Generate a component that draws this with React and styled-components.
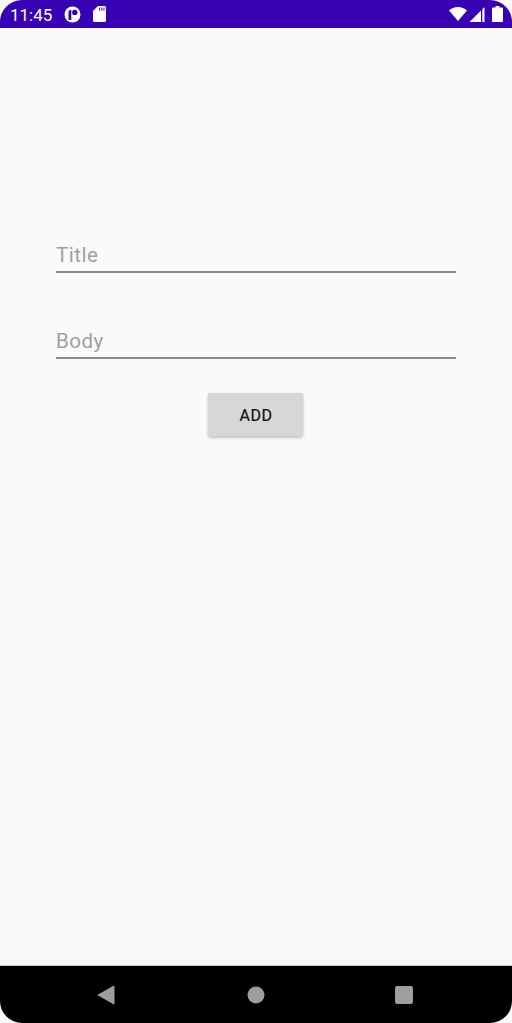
import React from "react";
import styled, { createGlobalStyle } from "styled-components";

const Global = createGlobalStyle`
  html, body { margin: 0; padding: 0; background: #fafafa; }
  * { box-sizing: border-box; }
`;

const Screen = styled.div`
  width: 512px;
  height: 1023px;
  display: flex;
  flex-direction: column;
  background: #fafafa;
  font-family: Roboto, "Liberation Sans", sans-serif;
  overflow: hidden;
`;

const StatusBar = styled.div`
  flex: 0 0 28px;
  height: 28px;
  background: #3700b3;
  color: #fff;
  display: flex;
  align-items: center;
  justify-content: space-between;
  padding: 0 9px 0 10px;
  border-radius: 22px 22px 0 0;
`;

const StatusGroup = styled.div`
  display: flex;
  align-items: center;
  gap: ${(p) => p.$gap}px;
`;

const Clock = styled.span`
  font-size: 17px;
  letter-spacing: 0;
  padding-top: 1px;
  line-height: 28px;
`;

const Content = styled.main`
  flex: 1;
  display: flex;
  flex-direction: column;
  align-items: center;
  padding: 213px 56px 0;
`;

const Field = styled.div`
  width: 400px;
  height: 32px;
  margin-bottom: ${(p) => p.$mb}px;
  border-bottom: 2px solid #8a8a8a;
  color: #a0a0a0;
  font-size: 20.5px;
  letter-spacing: 0.5px;
  line-height: 28px;
`;

const AddButton = styled.button`
  width: 95px;
  height: 43px;
  margin: 34px 1px 0 0;
  padding: 2px 0 0 1px;
  border: none;
  border-radius: 2px;
  background: #d6d7d7;
  color: #111;
  font-family: inherit;
  font-size: 16px;
  font-weight: 400;
  letter-spacing: 0.45px;
  -webkit-text-stroke: 0.2px #111;
  box-shadow: 0 2px 3px rgba(0, 0, 0, 0.2), 0 0 2px rgba(0, 0, 0, 0.08);
`;

const NavBar = styled.nav`
  flex: 0 0 58px;
  height: 58px;
  background: #000;
  border-top: 1px solid #c8c8c8;
  border-radius: 0 0 22px 22px;
  display: grid;
  grid-template-columns: repeat(3, 148px);
  justify-content: center;
  align-items: center;
`;

const NavSlot = styled.div`
  display: flex;
  justify-content: center;
  align-items: center;
`;

export default function App() {
  return (
    <Screen>
      <Global />
      <StatusBar>
        <StatusGroup $gap={12}>
          <Clock>11:45</Clock>
          <svg width="17" height="17" viewBox="0 0 17 17">
            <circle cx="8.5" cy="8.5" r="8" fill="#fff" />
            <path d="M4.5 14V6.5A2.8 2.8 0 0 1 7.3 3.7V14Z" fill="#3700b3" />
            <circle cx="10.8" cy="6.4" r="2.7" fill="#3700b3" />
          </svg>
          <svg width="13" height="16" viewBox="0 0 13 16">
            <path d="M5 0H11.5A1.5 1.5 0 0 1 13 1.5V14.5A1.5 1.5 0 0 1 11.5 16H1.5A1.5 1.5 0 0 1 0 14.5V5Z" fill="#fff" />
            <path d="M6.6 1.5v3.2M8.8 1.5v3.2M11 1.5v3.2" stroke="#3700b3" strokeWidth="1" />
          </svg>
        </StatusGroup>
        <StatusGroup $gap={2}>
          <svg width="18" height="14" viewBox="0 0 18 14">
            <path d="M0 3.6C2.4 1.4 5.5 0 9 0s6.6 1.4 9 3.6L9 14Z" fill="#fff" />
          </svg>
          <svg width="16" height="15" viewBox="0 0 16 15">
            <path d="M0.5 15L12 3.5V15Z" fill="#fff" />
            <path d="M13.3 2.2L15.5 0V15H13.3Z" fill="#fff" />
          </svg>
          <svg width="11" height="16" viewBox="0 0 11 16" style={{ marginLeft: 5 }}>
            <path d="M3.5 0h4v1.6H10a1 1 0 0 1 1 1V15a1 1 0 0 1-1 1H1a1 1 0 0 1-1-1V2.6a1 1 0 0 1 1-1h2.5Z" fill="#fff" />
          </svg>
        </StatusGroup>
      </StatusBar>
      <Content>
        <Field $mb={54}>Title</Field>
        <Field $mb={0}>Body</Field>
        <AddButton>ADD</AddButton>
      </Content>
      <NavBar>
        <NavSlot>
          <svg width="18" height="20" viewBox="0 0 18 20" style={{ marginRight: 4 }}>
            <path d="M17 1V19L1 10Z" fill="#9e9e9e" stroke="#9e9e9e" strokeLinejoin="round" />
          </svg>
        </NavSlot>
        <NavSlot>
          <svg width="18" height="18" viewBox="0 0 18 18">
            <circle cx="9" cy="9" r="8.5" fill="#9e9e9e" />
          </svg>
        </NavSlot>
        <NavSlot>
          <svg width="18" height="18" viewBox="0 0 18 18">
            <rect width="18" height="18" rx="2" fill="#9e9e9e" />
          </svg>
        </NavSlot>
      </NavBar>
    </Screen>
  );
}
